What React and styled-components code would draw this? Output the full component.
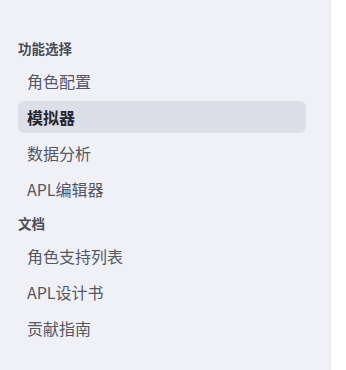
import styled, { createGlobalStyle } from "styled-components";

const GlobalStyle = createGlobalStyle`
  html, body {
    margin: 0;
    padding: 0;
    background: #ffffff;
  }
  body {
    font-family: "Noto Sans CJK SC", "Noto Sans", sans-serif;
  }
`;

const sections = [
  {
    title: "功能选择",
    links: ["角色配置", "模拟器", "数据分析", "APL编辑器"],
  },
  {
    title: "文档",
    links: ["角色支持列表", "APL设计书", "贡献指南"],
  },
];

const App = () => {
  const active = "模拟器";

  return (
    <>
      <GlobalStyle />
      <Layout>
        <Sidebar>
          <Nav>
            {sections.map((section, i) => (
              <Section key={section.title} $first={i === 0}>
                <SectionTitle>{section.title}</SectionTitle>
                <LinkList>
                  {section.links.map((link) => (
                    <NavItem key={link} $active={link === active}>
                      {link}
                    </NavItem>
                  ))}
                </LinkList>
              </Section>
            ))}
          </Nav>
        </Sidebar>
        <Main />
      </Layout>
    </>
  );
};

const Layout = styled.div`
  display: flex;
  min-height: 100vh;
`;

const Sidebar = styled.aside`
  width: 330px;
  flex-shrink: 0;
  background: #f0f1f7;
  border-right: 1px solid #e8e9ef;
`;

const Nav = styled.nav`
  padding: 38px 24px 0 18px;
`;

const Section = styled.div`
  margin-top: ${({ $first }) => ($first ? "0" : "8px")};
`;

const SectionTitle = styled.div`
  height: 20px;
  line-height: 20px;
  font-size: 13.5px;
  font-weight: 600;
  color: #4b4d58;
  margin-bottom: 7px;
`;

const LinkList = styled.div`
  display: flex;
  flex-direction: column;
  gap: 4px;
`;

const NavItem = styled.div`
  height: 32px;
  line-height: 32px;
  padding: 0 9px;
  border-radius: 6px;
  font-size: 16px;
  font-weight: ${({ $active }) => ($active ? 700 : 400)};
  color: ${({ $active }) => ($active ? "#262730" : "#555763")};
  background: ${({ $active }) => ($active ? "#dcdee8" : "transparent")};
`;

const Main = styled.main`
  flex: 1;
  background: #ffffff;
`;

export default App;
